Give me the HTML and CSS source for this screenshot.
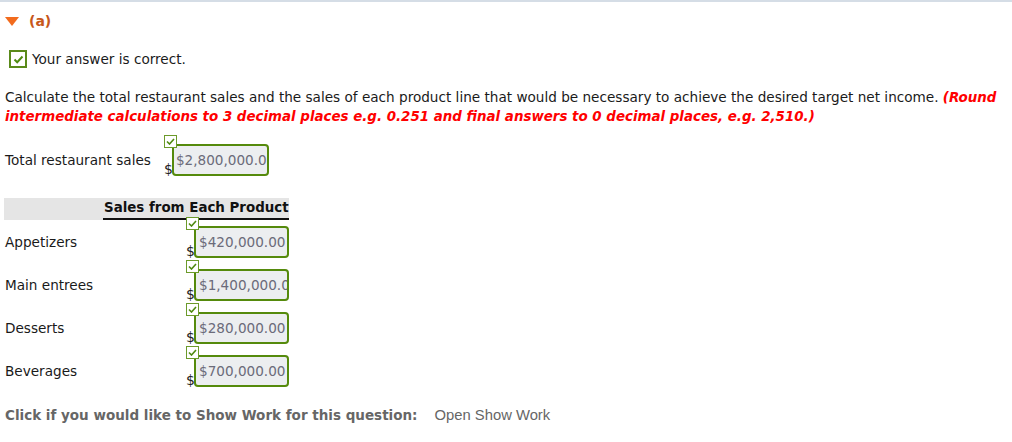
FILE: index.html
```html
<!DOCTYPE html>
<html>
<head>
<meta charset="utf-8">
<link rel="stylesheet" href="styles.css">
</head>
<body>
<div class="page">
  <div class="part-head">
    <svg class="tri" width="14" height="9" viewBox="0 0 14 9"><polygon points="0,0 14,0 7,9" fill="#f26b1d"/></svg>
    <span class="part-label">(a)</span>
  </div>
  <div class="correct">
    <span class="bigcheck"><svg width="13" height="13" viewBox="0 0 13 13"><path d="M2.5 6.5 L5.2 9.2 L10.5 3.5" fill="none" stroke="#4f8a10" stroke-width="2"/></svg></span>
    <span>Your answer is correct.</span>
  </div>
  <p class="question">Calculate the total restaurant sales and the sales of each product line that would be necessary to achieve the desired target net income. <em class="hint">(Round intermediate calculations to 3 decimal places e.g. 0.251 and final answers to 0 decimal places, e.g. 2,510.)</em></p>

  <div class="total-row">
    <span class="label">Total restaurant sales</span>
    <span class="answer">
      <span class="dollar">$</span>
      <span class="box">$2,800,000.00</span>
      <span class="mini"><svg width="9" height="7" viewBox="0 0 9 7"><path d="M1 3.5 L3.5 6 L8 1" fill="none" stroke="#4f8a10" stroke-width="1.6"/></svg></span>
    </span>
  </div>

  <div class="table">
    <div class="thead">
      <div class="th-spacer"></div>
      <div class="th">Sales from Each Product</div>
    </div>
    <div class="row">
      <span class="label">Appetizers</span>
      <span class="answer">
        <span class="dollar">$</span>
        <span class="box">$420,000.00</span>
        <span class="mini"><svg width="9" height="7" viewBox="0 0 9 7"><path d="M1 3.5 L3.5 6 L8 1" fill="none" stroke="#4f8a10" stroke-width="1.6"/></svg></span>
      </span>
    </div>
    <div class="row">
      <span class="label">Main entrees</span>
      <span class="answer">
        <span class="dollar">$</span>
        <span class="box">$1,400,000.00</span>
        <span class="mini"><svg width="9" height="7" viewBox="0 0 9 7"><path d="M1 3.5 L3.5 6 L8 1" fill="none" stroke="#4f8a10" stroke-width="1.6"/></svg></span>
      </span>
    </div>
    <div class="row">
      <span class="label">Desserts</span>
      <span class="answer">
        <span class="dollar">$</span>
        <span class="box">$280,000.00</span>
        <span class="mini"><svg width="9" height="7" viewBox="0 0 9 7"><path d="M1 3.5 L3.5 6 L8 1" fill="none" stroke="#4f8a10" stroke-width="1.6"/></svg></span>
      </span>
    </div>
    <div class="row">
      <span class="label">Beverages</span>
      <span class="answer">
        <span class="dollar">$</span>
        <span class="box">$700,000.00</span>
        <span class="mini"><svg width="9" height="7" viewBox="0 0 9 7"><path d="M1 3.5 L3.5 6 L8 1" fill="none" stroke="#4f8a10" stroke-width="1.6"/></svg></span>
      </span>
    </div>
  </div>

  <div class="showwork">
    <span class="sw-label">Click if you would like to Show Work for this question:</span>
    <span class="sw-link">Open Show Work</span>
  </div>
</div>
</body>
</html>
```
FILE: styles.css
```css
html, body {
  margin: 0;
  padding: 0;
  background: #ffffff;
}
body {
  font-family: "DejaVu Sans", Verdana, sans-serif;
  font-size: 13.6px;
  color: #1a1a1a;
}
.page {
  border-top: 2px solid #d5dde6;
  padding: 0 5px;
  width: 1002px;
}
.part-head {
  display: flex;
  align-items: center;
  height: 38px;
}
.tri {
  margin-right: 10px;
}
.part-label {
  color: #c7571a;
  font-weight: bold;
  font-size: 14px;
}
.correct {
  display: flex;
  align-items: center;
  gap: 5px;
  margin-top: 10px;
  padding-left: 4px;
}
.bigcheck {
  width: 14px;
  height: 14px;
  border: 2px solid #5a8a1a;
  display: inline-flex;
  align-items: center;
  justify-content: center;
  background: #fff;
}
.question {
  margin: 20px 0 0 0;
  line-height: 19px;
}
.hint {
  color: #ff0000;
  font-weight: bold;
  font-style: italic;
  font-size: 13.4px;
}
.total-row {
  display: flex;
  align-items: center;
  margin-top: 9px;
}
.total-row .label {
  width: 159px;
  padding-top: 9px;
}
.total-row .answer {
  padding-top: 9px;
}
.answer {
  position: relative;
  display: inline-flex;
  align-items: flex-end;
}
.dollar {
  font-size: 14px;
  line-height: 14px;
  color: #222;
}
.box {
  display: inline-block;
  box-sizing: border-box;
  width: 97px;
  height: 32px;
  border: 2px solid #558a0c;
  border-radius: 4px;
  background: #eceef0;
  color: #6b6b7a;
  font-size: 13.6px;
  line-height: 28px;
  padding-left: 2px;
  overflow: hidden;
  white-space: nowrap;
  margin-left: -1px;
}
.mini {
  position: absolute;
  left: 0;
  top: 0;
  width: 11px;
  height: 11px;
  border: 1px solid #6c9a2a;
  background: #fff;
  display: flex;
  align-items: center;
  justify-content: center;
}
.row .mini {
  top: -9px;
}
.table {
  margin-top: 22px;
  width: 285px;
  margin-left: -1px;
}
.thead {
  display: flex;
  background: #e5e5e5;
  height: 22px;
}
.th-spacer {
  width: 99px;
}
.th {
  flex: 1;
  font-weight: bold;
  font-size: 13.4px;
  line-height: 19px;
  white-space: nowrap;
  border-bottom: 2px solid #111;
  color: #111;
  padding-left: 1px;
}
.row {
  display: flex;
  justify-content: space-between;
  align-items: center;
  height: 43px;
  padding-left: 1px;
}
.row .box {
  width: 95px;
  padding-left: 3px;
}
.showwork {
  margin-top: 8px;
  display: flex;
  align-items: center;
  height: 30px;
  font-size: 13.5px;
}
.sw-label {
  font-weight: bold;
  color: #666;
}
.sw-link {
  margin-left: 17px;
  color: #666;
  font-family: "Liberation Sans", Arial, sans-serif;
  font-size: 14.8px;
}
```
